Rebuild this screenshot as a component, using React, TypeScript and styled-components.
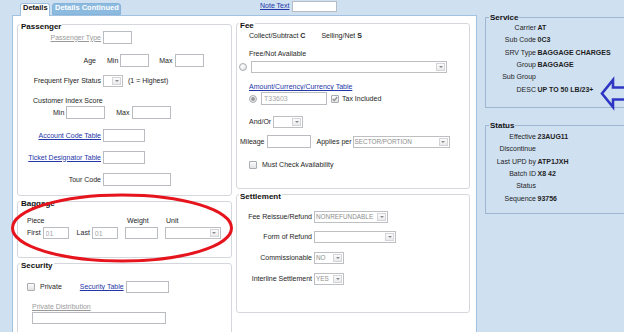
import React from "react";
import styled, { createGlobalStyle } from "styled-components";

const FONT = `"Liberation Sans", Arial, sans-serif`;

const GlobalStyle = createGlobalStyle`
  html, body { margin: 0; padding: 0; background: #cfe0f1; }
  body { font-family: ${FONT}; font-size: 7px; line-height: 8px; color: #1e1e1e; }
  #root { width: 624px; height: 332px; }
  * { box-sizing: border-box; }
`;

const Page = styled.div`
  position: relative;
  width: 624px;
  height: 332px;
  overflow: hidden;
  display: flex;
  background: #cfe0f1;
`;

const MainColumn = styled.div`
  flex: none;
  width: 477px;
  display: flex;
  flex-direction: column;
`;

const TopBar = styled.div`
  position: relative;
  z-index: 1;
  height: 16px;
  margin-bottom: -1px;
  display: flex;
  align-items: flex-start;
  padding-left: 20px;
`;

const Tab = styled.div<{ $active?: boolean }>`
  flex: none;
  margin-top: 3px;
  margin-right: 2px;
  height: ${(p) => (p.$active ? 13 : 12)}px;
  width: ${(p) => (p.$active ? 30 : 69)}px;
  padding-left: 2px;
  border: 1px solid ${(p) => (p.$active ? "#9fbedc" : "#86b3da")};
  border-bottom: ${(p) => (p.$active ? "none" : "1px solid #86b3da")};
  border-radius: 3px 3px 0 0;
  background: ${(p) => (p.$active ? "#ffffff" : "#8dbadf")};
  color: ${(p) => (p.$active ? "#111" : "#fff")};
  font-weight: bold;
  font-size: 7.5px;
  line-height: 8px;
  white-space: nowrap;
`;

const NoteLink = styled.a`
  margin-left: 137px;
  margin-top: 2px;
  color: #2436a8;
  text-decoration: underline;
  white-space: nowrap;
`;

const NoteInput = styled.input`
  width: 45px;
  height: 11px;
  margin: 1px 0 0 3px;
  padding: 0;
  border: 1px solid #b4bcc6;
  background: #fff;
  outline: none;
`;

const Panel = styled.div`
  flex: 1;
  margin-left: 12px;
  background: #fff;
  border: 1px solid #a2c2e2;
  border-bottom: none;
  display: flex;
  gap: 4px;
  padding: 8px 6px 0 4px;
`;

const Column = styled.div<{ $w: number; $mt?: number }>`
  flex: none;
  width: ${(p) => p.$w}px;
  margin-top: ${(p) => p.$mt ?? 0}px;
  display: flex;
  flex-direction: column;
  gap: 5px;
`;

const Group = styled.section<{ $h: number }>`
  flex: none;
  height: ${(p) => p.$h}px;
  border: 1px solid #d4d8dd;
  border-radius: 3px;
`;

const Legend = styled.div`
  width: fit-content;
  margin: -3px 0 0 2px;
  padding: 0 1px;
  background: #fff;
  font: bold 8px/9px ${FONT};
  color: #111;
`;

const Row = styled.div<{ $mt?: number; $pl?: number; $h?: number }>`
  display: flex;
  align-items: center;
  height: ${(p) => p.$h ?? 13}px;
  margin-top: ${(p) => p.$mt ?? 0}px;
  padding-left: ${(p) => p.$pl ?? 0}px;
  white-space: nowrap;
`;

type Kind = "text" | "link" | "muted";

const Label = styled.span<{ $w?: number; $ml?: number; $mr?: number; $kind?: Kind; $left?: boolean }>`
  flex: none;
  ${(p) => (p.$w !== undefined ? `width: ${p.$w}px;` : "")}
  text-align: ${(p) => (p.$left ? "left" : "right")};
  margin-left: ${(p) => p.$ml ?? 0}px;
  margin-right: ${(p) => p.$mr ?? 2}px;
  color: ${(p) => (p.$kind === "link" ? "#2436a8" : p.$kind === "muted" ? "#9a9a9a" : "#1e1e1e")};
  text-decoration: ${(p) => (p.$kind === "link" || p.$kind === "muted" ? "underline" : "none")};
  line-height: 8px;
`;

const Value = styled.b`
  font-weight: bold;
`;

const TextBox = styled.input<{ $w: number; $h?: number; $ml?: number }>`
  flex: none;
  width: ${(p) => p.$w}px;
  height: ${(p) => p.$h ?? 13}px;
  margin: 0 0 0 ${(p) => p.$ml ?? 0}px;
  padding: 0 2px;
  border: 1px solid #b9bcc0;
  border-radius: 0;
  background: #fff;
  font: 7px ${FONT};
  color: #a5a5a5;
  outline: none;
`;

const SelectBox = styled.div<{ $w: number; $h?: number; $ml?: number }>`
  flex: none;
  display: flex;
  width: ${(p) => p.$w}px;
  height: ${(p) => p.$h ?? 12}px;
  margin-left: ${(p) => p.$ml ?? 0}px;
  border: 1px solid #bdbfc2;
  background: #fff;
  color: #8e8e8e;
`;

const SelectText = styled.span`
  flex: 1;
  padding-left: 1px;
  font-size: 6.4px;
  line-height: 10px;
  overflow: hidden;
  white-space: nowrap;
`;

const SelectButton = styled.span`
  flex: none;
  width: 9px;
  margin: 1px;
  border: 1px solid #d3d5d8;
  background: linear-gradient(#fbfbfb, #eaeaea);
  display: flex;
  align-items: center;
  justify-content: center;
  &::after {
    content: "";
    border-left: 2px solid transparent;
    border-right: 2px solid transparent;
    border-top: 2px solid #8a8a8a;
  }
`;

const CheckBox = styled.span<{ $ml?: number }>`
  flex: none;
  width: 8px;
  height: 8px;
  margin-left: ${(p) => p.$ml ?? 0}px;
  border: 1px solid #a9acb1;
  border-radius: 1px;
  background: linear-gradient(#fbfbfb, #e3e3e3);
  display: flex;
  align-items: center;
  justify-content: center;
`;

const Radio = styled.span<{ $checked?: boolean; $ml?: number }>`
  flex: none;
  width: 8px;
  height: 8px;
  margin-left: ${(p) => p.$ml ?? 0}px;
  border: 1px solid #a9acb1;
  border-radius: 50%;
  background: radial-gradient(circle at 40% 35%, #ffffff, #dcdcdc);
  display: flex;
  align-items: center;
  justify-content: center;
  &::after {
    content: "";
    display: ${(p) => (p.$checked ? "block" : "none")};
    width: 4px;
    height: 4px;
    border-radius: 50%;
    background: #9a9a9a;
  }
`;

const Side = styled.div`
  flex: 1;
  display: flex;
  flex-direction: column;
  gap: 17px;
  padding: 17px 0 0 8px;
`;

const InfoGroup = styled.section<{ $h: number }>`
  flex: none;
  width: 150px;
  height: ${(p) => p.$h}px;
  border: 1px solid #9fb8d2;
`;

const InfoLegend = styled.div`
  width: fit-content;
  margin: -5px 0 0 3px;
  padding: 0 1px;
  background: #cfe0f1;
  font: bold 8px/9px ${FONT};
  color: #111;
`;

const InfoList = styled.div<{ $mt?: number }>`
  margin-top: ${(p) => p.$mt ?? 0}px;
  display: flex;
  flex-direction: column;
`;

const InfoRow = styled.div`
  display: flex;
  align-items: center;
  height: 12.3px;
  white-space: nowrap;
`;

const InfoLabel = styled.span`
  flex: none;
  width: 50px;
  text-align: right;
  margin-right: 1.5px;
`;

const Overlay = styled.svg`
  position: absolute;
  left: 0;
  top: 0;
  pointer-events: none;
`;

function Select({ w, text, h, ml }: { w: number; text?: string; h?: number; ml?: number }) {
  return (
    <SelectBox $w={w} $h={h} $ml={ml}>
      <SelectText>{text ?? ""}</SelectText>
      <SelectButton />
    </SelectBox>
  );
}

function Check({ ml, checked }: { ml?: number; checked?: boolean }) {
  return (
    <CheckBox $ml={ml}>
      {checked && (
        <svg width="6" height="6" viewBox="0 0 6 6">
          <polyline points="0.8,3 2.3,4.6 5.2,1" fill="none" stroke="#8d8d8d" strokeWidth="1.2" />
        </svg>
      )}
    </CheckBox>
  );
}

const serviceRows: [string, string][] = [
  ["Carrier", "AT"],
  ["Sub Code", "0C3"],
  ["SRV Type", "BAGGAGE CHARGES"],
  ["Group", "BAGGAGE"],
  ["Sub Group", ""],
  ["DESC", "UP TO 50 LB/23+"],
];

const statusRows: [string, string][] = [
  ["Effective", "23AUG11"],
  ["Discontinue", ""],
  ["Last UPD by", "ATP1JXH"],
  ["Batch ID", "X8 42"],
  ["Status", ""],
  ["Sequence", "93756"],
];

export default function App() {
  return (
    <>
      <GlobalStyle />
      <Page>
        <MainColumn>
          <TopBar>
            <Tab $active>Details</Tab>
            <Tab>Details Continued</Tab>
            <NoteLink>Note Text</NoteLink>
            <NoteInput readOnly />
          </TopBar>
          <Panel>
            <Column $w={215}>
              <Group $h={172}>
                <Legend>Passenger</Legend>
                <Row>
                  <Label $w={83} $kind="muted">Passenger Type</Label>
                  <TextBox $w={29} readOnly />
                </Row>
                <Row $mt={10}>
                  <Label $w={78}>Age</Label>
                  <Label $ml={9}>Min</Label>
                  <TextBox $w={29} readOnly />
                  <Label $ml={10}>Max</Label>
                  <TextBox $w={29} readOnly />
                </Row>
                <Row $mt={8} $h={12}>
                  <Label $w={83}>Frequent Flyer Status</Label>
                  <Select w={20} />
                  <Label $ml={5}>(1 = Highest)</Label>
                </Row>
                <Row $mt={10} $h={8} $pl={15}>
                  <Label>Customer Index Score</Label>
                </Row>
                <Row $mt={1} $pl={35}>
                  <Label>Min</Label>
                  <TextBox $w={39} readOnly />
                  <Label $ml={11}>Max</Label>
                  <TextBox $w={39} readOnly />
                </Row>
                <Row $mt={10}>
                  <Label $w={83} $kind="link">Account Code Table</Label>
                  <TextBox $w={42} readOnly />
                </Row>
                <Row $mt={9}>
                  <Label $w={83} $kind="link">Ticket Designator Table</Label>
                  <TextBox $w={42} readOnly />
                </Row>
                <Row $mt={9}>
                  <Label $w={83}>Tour Code</Label>
                  <TextBox $w={68} readOnly />
                </Row>
              </Group>

              <Group $h={57}>
                <Legend>Baggage</Legend>
                <Row $mt={9} $h={8} $pl={9}>
                  <Label $w={100} $left $mr={0}>Piece</Label>
                  <Label $w={39} $left $mr={0}>Weight</Label>
                  <Label $left $mr={0}>Unit</Label>
                </Row>
                <Row $mt={2} $h={12} $pl={9}>
                  <Label>First</Label>
                  <TextBox $w={26} $h={12} readOnly value="01" />
                  <Label $ml={8}>Last</Label>
                  <TextBox $w={26} $h={12} readOnly value="01" />
                  <TextBox $w={33} $h={12} $ml={7} readOnly />
                  <Select w={56} ml={7} />
                </Row>
              </Group>

              <Group $h={80}>
                <Legend>Security</Legend>
                <Row $mt={11} $h={12} $pl={9}>
                  <Check />
                  <Label $ml={5}>Private</Label>
                  <Label $ml={16} $kind="link">Security Table</Label>
                  <TextBox $w={43} $h={12} readOnly />
                </Row>
                <Row $mt={10} $h={8} $pl={14}>
                  <Label $kind="muted">Private Distribution</Label>
                </Row>
                <Row $mt={1} $h={12} $pl={14}>
                  <TextBox $w={134} $h={12} readOnly />
                </Row>
              </Group>
            </Column>

            <Column $w={234} $mt={-1}>
              <Group $h={166}>
                <Legend>Fee</Legend>
                <Row $mt={2} $h={8} $pl={12}>
                  <Label $mr={0}>
                    Collect/Subtract <Value>C</Value>
                  </Label>
                  <Label $ml={16} $mr={0}>
                    Selling/Net <Value>S</Value>
                  </Label>
                </Row>
                <Row $mt={10} $h={8} $pl={12}>
                  <Label>Free/Not Available</Label>
                </Row>
                <Row $mt={3} $h={12} $pl={2}>
                  <Radio />
                  <Select w={196} ml={4} />
                </Row>
                <Row $mt={10} $h={8} $pl={12}>
                  <Label $kind="link">Amount/Currency/Currency Table</Label>
                </Row>
                <Row $mt={1} $pl={12}>
                  <Radio $checked />
                  <TextBox $w={66} $ml={4} readOnly value="T33603" />
                  <Check ml={4} checked />
                  <Label $ml={3}>Tax Included</Label>
                </Row>
                <Row $mt={11} $h={12} $pl={12}>
                  <Label>And/Or</Label>
                  <Select w={30} />
                </Row>
                <Row $mt={7} $pl={3}>
                  <Label>Mileage</Label>
                  <TextBox $w={44} readOnly />
                  <Label $ml={6} $mr={1}>Applies per</Label>
                  <Select w={97} text="SECTOR/PORTION" />
                </Row>
                <Row $mt={12} $h={10} $pl={12}>
                  <Check />
                  <Label $ml={5}>Must Check Availability</Label>
                </Row>
              </Group>

              <Group $h={119}>
                <Legend>Settlement</Legend>
                <Row $mt={10} $h={12}>
                  <Label $w={75}>Fee Reissue/Refund</Label>
                  <Select w={74} text="NONREFUNDABLE" />
                </Row>
                <Row $mt={8} $h={12}>
                  <Label $w={75}>Form of Refund</Label>
                  <Select w={82} />
                </Row>
                <Row $mt={9} $h={12}>
                  <Label $w={75}>Commissionable</Label>
                  <Select w={30} text="NO" />
                </Row>
                <Row $mt={9} $h={12}>
                  <Label $w={75}>Interline Settlement</Label>
                  <Select w={30} text="YES" />
                </Row>
              </Group>
            </Column>
          </Panel>
        </MainColumn>

        <Side>
          <InfoGroup $h={91}>
            <InfoLegend>Service</InfoLegend>
            <InfoList>
              {serviceRows.map(([k, v]) => (
                <InfoRow key={k}>
                  <InfoLabel>{k}</InfoLabel>
                  <Value>{v}</Value>
                </InfoRow>
              ))}
            </InfoList>
          </InfoGroup>
          <InfoGroup $h={89}>
            <InfoLegend>Status</InfoLegend>
            <InfoList $mt={1}>
              {statusRows.map(([k, v]) => (
                <InfoRow key={k}>
                  <InfoLabel>{k}</InfoLabel>
                  <Value>{v}</Value>
                </InfoRow>
              ))}
            </InfoList>
          </InfoGroup>
        </Side>

        <Overlay width="624" height="332" viewBox="0 0 624 332">
          <ellipse cx="122" cy="228" rx="109.5" ry="33" fill="none" stroke="#e5141d" strokeWidth="3" />
          <path
            d="M630 87.5 L613 87.5 L613 80 L602 93.5 L613 107 L613 99.5 L630 99.5"
            fill="none"
            stroke="#2f36c4"
            strokeWidth="2.6"
            strokeLinejoin="miter"
          />
        </Overlay>
      </Page>
    </>
  );
}
